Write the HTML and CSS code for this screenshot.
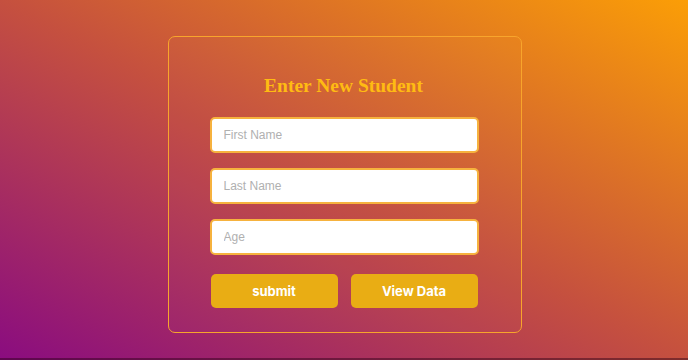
FILE: index.html
```html
<!DOCTYPE html>
<html lang="en">
<head>
<meta charset="utf-8">
<title>Enter New Student</title>
<link rel="stylesheet" href="styles.css">
</head>
<body>
<div class="page">
  <form class="card">
    <h1 class="title">Enter New Student</h1>
    <input class="field" type="text" placeholder="First Name">
    <input class="field" type="text" placeholder="Last Name">
    <input class="field" type="text" placeholder="Age">
    <div class="actions">
      <button class="btn" type="button">submit</button>
      <button class="btn" type="button">View Data</button>
    </div>
  </form>
</div>
</body>
</html>
```
FILE: styles.css
```css
html, body {
  margin: 0;
  padding: 0;
  height: 100%;
}
body {
  background: linear-gradient(to top right, #8a0c80 0%, #c5503f 50%, #fb9e06 100%);
  font-family: "Liberation Sans", Arial, sans-serif;
}
.page {
  box-sizing: border-box;
  height: 360px;
  padding: 36px 0 0 1px;
  display: flex;
  justify-content: center;
  align-items: flex-start;
  box-shadow: inset 0 -2px 0 rgba(40, 0, 20, 0.45);
}
.card {
  box-sizing: border-box;
  width: 354px;
  height: 297px;
  border: 1px solid #f8a52c;
  border-radius: 7px;
  background: rgba(255, 255, 255, 0.015);
  padding: 37px 43px 0 41px;
  display: flex;
  flex-direction: column;
}
.title {
  margin: 0 0 19px 0;
  font-family: "Liberation Serif", "Times New Roman", serif;
  font-weight: bold;
  font-size: 19.5px;
  line-height: 24px;
  text-align: center;
  color: #ffbb12;
}
.field {
  box-sizing: border-box;
  width: 269px;
  height: 36px;
  margin: 0 0 15px 0;
  padding: 0 12px;
  border: 2px solid #f6b23e;
  border-radius: 5px;
  background: #fff;
  font-family: "Liberation Sans", Arial, sans-serif;
  font-size: 12px;
  color: #333;
  outline: none;
}
.field::placeholder {
  color: #b0b0b0;
}
.actions {
  margin-top: 4px;
  display: flex;
  justify-content: space-between;
  padding-left: 1px;
}
.btn {
  width: 127px;
  height: 34px;
  border: none;
  border-radius: 5px;
  background: #e9ad14;
  color: #fff;
  font-family: Inter, "Liberation Sans", Arial, sans-serif;
  font-weight: 700;
  font-size: 13px;
  cursor: pointer;
}
```
